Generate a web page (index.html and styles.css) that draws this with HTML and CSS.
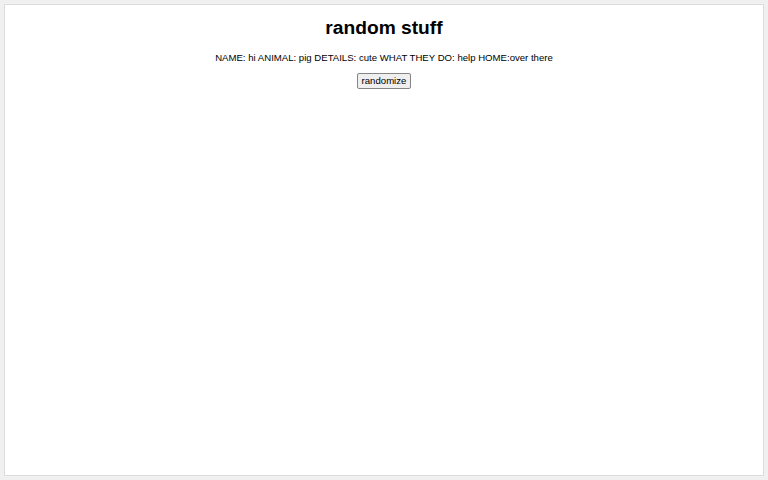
FILE: index.html
```html
<!DOCTYPE html>
<html lang="en">
<head>
    <meta charset="UTF-8">
    <meta name="viewport" content="width=device-width, initial-scale=1.0">
    <title>random stuff</title>
    <link rel="stylesheet" href="styles.css">
</head>
<body>
    <div class="page">
        <h1>random stuff</h1>
        <p class="result" id="result">NAME: hi ANIMAL: pig DETAILS: cute WHAT THEY DO: help HOME:over there</p>
        <button onclick="randomize()">randomize</button>
    </div>

    <script>
        const names = ['hi', 'bob', 'sam', 'lulu'];
        const animals = ['pig', 'cat', 'dog', 'frog'];
        const details = ['cute', 'fluffy', 'small', 'loud'];
        const jobs = ['help', 'sleep', 'eat', 'dance'];
        const homes = ['over there', 'a barn', 'the city', 'a pond'];

        function pick(list) {
            return list[Math.floor(Math.random() * list.length)];
        }

        function randomize() {
            document.getElementById('result').textContent =
                'NAME: ' + pick(names) +
                ' ANIMAL: ' + pick(animals) +
                ' DETAILS: ' + pick(details) +
                ' WHAT THEY DO: ' + pick(jobs) +
                ' HOME:' + pick(homes);
        }
    </script>
</body>
</html>
```

FILE: styles.css
```css
html, body {
    height: 100%;
}

body {
    margin: 0;
    padding: 4px;
    box-sizing: border-box;
    background: #f0f0f0;
    font-family: "Liberation Sans", Arial, sans-serif;
    color: #000;
}

.page {
    height: 100%;
    box-sizing: border-box;
    background: #fff;
    border: 1px solid #dcdcdc;
    text-align: center;
    padding-top: 12px;
}

h1 {
    margin: 0;
    font-size: 19.2px;
    line-height: 22px;
}

.result {
    font-size: 9.6px;
    line-height: 12px;
    margin: 13px 0 6px;
}

button {
    font-family: "Liberation Sans", Arial, sans-serif;
    font-size: 9.6px;
    line-height: 12px;
    height: 16px;
    padding: 0 4px;
    background: #efefef;
    border: 1px solid #858585;
    border-radius: 2px;
    color: #000;
}
```
